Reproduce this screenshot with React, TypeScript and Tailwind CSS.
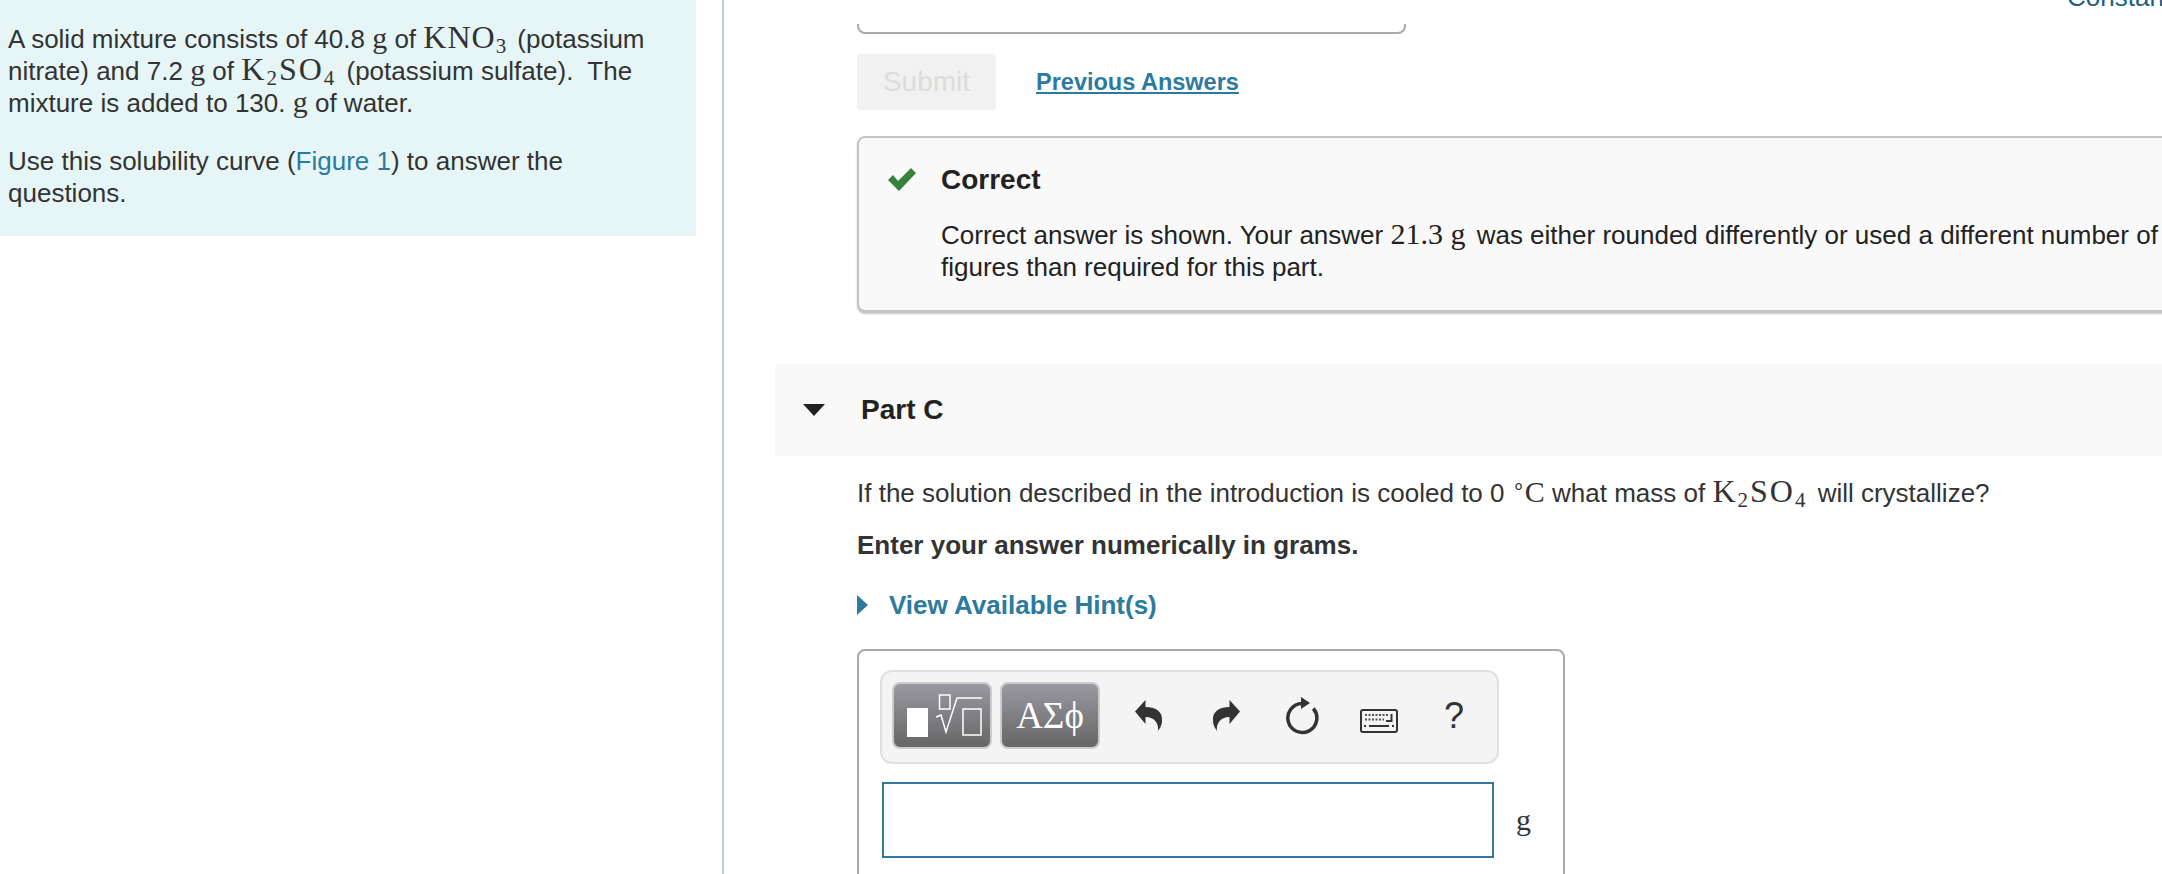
const sans = "font-['Liberation_Sans',Arial,sans-serif]";

function Tex({ children }: { children: React.ReactNode }) {
  return <span className="font-['Liberation_Serif',serif] text-[30px] leading-[0]">{children}</span>;
}

// chemical formulas sit wider than plain math in the original
function Formula({ children, wide }: { children: React.ReactNode; wide?: boolean }) {
  return (
    <span className={`mr-[3px] font-['Liberation_Serif',serif] text-[32px] leading-[0] ${wide ? "tracking-[2px]" : "tracking-[1px]"}`}>
      {children}
    </span>
  );
}

function Sub({ children }: { children: React.ReactNode }) {
  return <span className="align-[-5px] text-[21px] leading-[0]">{children}</span>;
}

function SqrtIcon() {
  return (
    <svg width="76" height="44" viewBox="0 0 76 44" className="ml-[6px] text-white">
      <rect x="0" y="14" width="21" height="29" fill="currentColor" />
      <rect x="32.500" y="1" width="10.500" height="14" fill="none" stroke="currentColor" strokeWidth="1.500" />
      <path d="M29 23l5-2 5 17 11-34h25" fill="none" stroke="currentColor" strokeWidth="1.500" />
      <rect x="56" y="15" width="18" height="26" fill="none" stroke="currentColor" strokeWidth="1.500" />
    </svg>
  );
}

function UndoIcon({ flip }: { flip?: boolean }) {
  return (
    <svg width="28" height="31" viewBox="0 0 28 31" className={flip ? "-scale-x-100" : ""}>
      <path d="M0 11.500L10.500 0v7C20 7 28 11 27 21c0 4-2 7-4 10 1-7-3-14-12.500-14v7z" fill="#333" />
    </svg>
  );
}

function RefreshIcon() {
  return (
    <svg width="34" height="38" viewBox="0 0 34 38">
      <path d="M27.300 11.500A14.500 14.500 0 1 1 16 6.500" fill="none" stroke="#333" strokeWidth="3.500" />
      <path d="M15 0l9 6-9 6z" fill="#333" />
    </svg>
  );
}

function KeyboardIcon() {
  return (
    <svg width="38" height="24" viewBox="0 0 38 24">
      <rect x="1" y="1" width="36" height="22" rx="2" fill="none" stroke="#333" strokeWidth="2" />
      <path d="M5 6h23M5 10.500h19" fill="none" stroke="#555" strokeWidth="2" strokeDasharray="2 1.500" />
      <path d="M31.500 5v7H26M9 17h20M4 17h2M32 17h2" fill="none" stroke="#333" strokeWidth="2" />
    </svg>
  );
}

export default function App() {
  return (
    <div className={`flex h-[874px] w-[2162px] overflow-hidden bg-white text-[26px] leading-[32px] text-[#333] ${sans}`}>
      <aside className="w-[722px] shrink-0">
        <div className="h-[236px] w-[696px] bg-[#e6f6f6] px-2 pt-[23px]">
          <p className="whitespace-nowrap">
            A solid mixture consists of 40.8 <Tex>g</Tex> of <Formula>KNO<Sub>3</Sub></Formula> (potassium
            <br />
            nitrate) and 7.2 <Tex>g</Tex> of <Formula wide>K<Sub>2</Sub>SO<Sub>4</Sub></Formula> (potassium sulfate).&nbsp; The
            <br />
            mixture is added to 130. <Tex>g</Tex> of water.
          </p>
          <p className="mt-[26px] whitespace-nowrap">
            Use this solubility curve (<span className="text-[#2d7a9f]">Figure 1</span>) to answer the
            <br />
            questions.
          </p>
        </div>
      </aside>

      <div className="w-[2px] shrink-0 bg-[#bccbdb]" />

      <main className="min-w-0 flex-1 overflow-hidden">
        <div className="-mt-[19px] ml-[1343px] whitespace-nowrap text-[#21607f]">Constants</div>

        <div className="ml-[133px] mt-[11px] flex h-[10px] w-[549px] flex-col justify-end overflow-hidden">
          <div className="h-[40px] shrink-0 rounded-lg border-2 border-[#aaa]" />
        </div>

        <div className="ml-[133px] mt-5 flex items-center gap-10">
          <button type="button" className="h-14 w-[139px] rounded bg-[#f1f1f1] text-[28px] text-[#dcdcdc]">Submit</button>
          <a className="text-[23.500px] font-bold text-[#2d7a9f] underline">Previous Answers</a>
        </div>

        <section className="-mr-6 ml-[133px] mt-[26px] flex h-[176px] rounded-lg border-2 border-[#c5c5c5] bg-[#f9f9f9] pl-7 pt-[26px] shadow-[0_2px_2px_#c5c5c5]">
          <svg width="30" height="24" viewBox="0 0 30 24" className="mt-[3px] shrink-0">
            <path d="M1 13l5-5 5 6L24 1l5 5-17 18z" fill="#36813c" />
          </svg>
          <div className="ml-6 whitespace-nowrap">
            <h3 className="text-[28px] font-bold text-[#222]">Correct</h3>
            <p className="mt-[23px] text-[#222]">
              Correct answer is shown. Your answer <span className="mr-1"><Tex>21.3 g</Tex></span> was either rounded differently or used a different number of
              <br />
              figures than required for this part.
            </p>
          </div>
        </section>

        <div className="ml-[51px] mt-[52px] flex h-[92px] items-center bg-[#f9f9f9] pl-7">
          <svg width="22" height="12" viewBox="0 0 22 12"><path d="M0 0h22L11 12z" fill="#222" /></svg>
          <h2 className="ml-9 text-[28px] font-bold text-[#222]">Part C</h2>
        </div>

        <div className="ml-[133px]">
          <p className="mt-[21px] whitespace-nowrap">
            If the solution described in the introduction is cooled to 0 <Tex><span className="align-[10px] text-[21px] leading-[0]">∘</span>C</Tex> what mass of <Formula wide>K<Sub>2</Sub>SO<Sub>4</Sub></Formula> will crystallize?
          </p>
          <p className="mt-5 font-bold">Enter your answer numerically in grams.</p>
          <div className="mt-[28px] flex items-center font-bold text-[#2d7a9f]">
            <svg width="11" height="20" viewBox="0 0 11 20"><path d="M0 0l11 10L0 20z" fill="#2d7a9f" /></svg>
            <span className="ml-[21px]">View Available Hint(s)</span>
          </div>

          <div className="mt-[28px] h-[260px] w-[708px] rounded-lg border-2 border-[#aaa] pl-[21px] pt-[19px]">
            <div className="flex h-[94px] w-[619px] items-center rounded-xl border-2 border-[#e0e0e0] bg-[#f4f4f4] pb-[3px] pl-[10px]">
              <button type="button" className="flex h-[67px] w-[100px] items-center justify-center rounded-lg border-2 border-[#ccc] bg-gradient-to-b from-[#9b99a2] to-[#666]">
                <SqrtIcon />
              </button>
              <button type="button" className="ml-2 flex h-[67px] w-[100px] items-center justify-center rounded-lg border-2 border-[#ccc] bg-gradient-to-b from-[#9b99a2] to-[#666] font-['Liberation_Serif',serif] text-[37px] text-white">
                ΑΣϕ
              </button>
              <div className="ml-[35px]"><UndoIcon /></div>
              <div className="ml-[49px]"><UndoIcon flip /></div>
              <div className="ml-[46px]"><RefreshIcon /></div>
              <div className="ml-10 mt-[10px]"><KeyboardIcon /></div>
              <span className="ml-[46px] text-[36px]">?</span>
            </div>
            <div className="ml-[2px] mt-[18px] flex items-center">
              <div className="h-[76px] w-[612px] border-2 border-[#337799] bg-white" />
              <span className="ml-[22px] font-['Liberation_Serif',serif] text-[30px]">g</span>
            </div>
          </div>
        </div>
      </main>
    </div>
  );
}
